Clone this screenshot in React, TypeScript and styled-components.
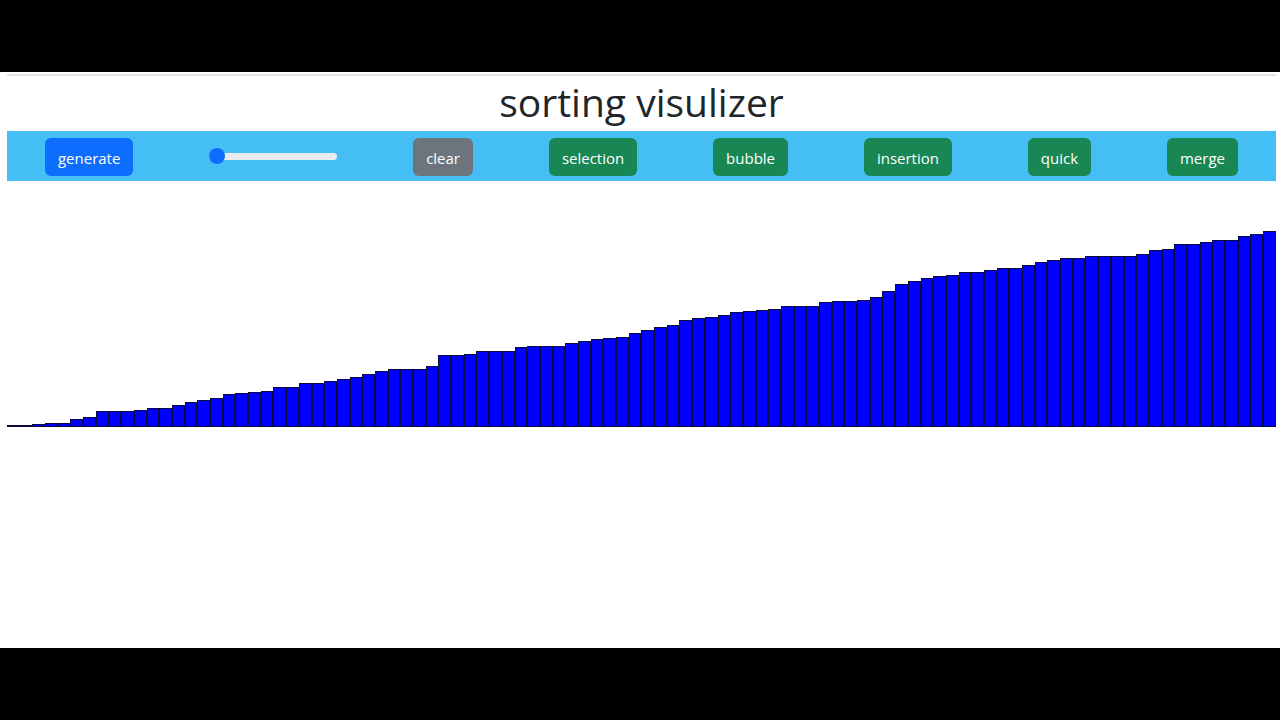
import React from "react";
import styled, { createGlobalStyle } from "styled-components";

const GlobalStyle = createGlobalStyle`
  html, body { margin: 0; padding: 0; background: #000; }
  * { box-sizing: border-box; }
`;

const HEIGHTS = [
  1, 1, 2, 3, 3, 7, 9, 15, 15, 15,
  16, 18, 18, 21, 24, 26, 28, 32, 33, 34,
  35, 39, 39, 43, 43, 45, 47, 49, 52, 55,
  57, 57, 57, 60, 71, 71, 72, 75, 75, 75,
  79, 80, 80, 80, 83, 85, 87, 88, 89, 93,
  96, 99, 101, 106, 108, 109, 111, 114, 115, 116,
  117, 120, 120, 120, 124, 125, 125, 126, 129, 135,
  142, 145, 148, 150, 151, 154, 154, 156, 158, 158,
  161, 164, 166, 168, 168, 170, 170, 170, 170, 172,
  176, 177, 182, 182, 184, 186, 186, 190, 192, 195,
];

const Screen = styled.div`
  width: 1280px;
  height: 720px;
  padding: 72px 0;
  background: #000;
`;

const Page = styled.div`
  height: 576px;
  background: #fff;
  padding: 2px 4px 0 7px;
  font-family: "Open Sans", "Noto Sans", sans-serif;
`;

const Rule = styled.div`
  height: 2px;
  background: #e2e2e2;
`;

const Title = styled.h1`
  margin: 0;
  height: 55px;
  line-height: 52px;
  text-align: center;
  font-size: 39px;
  font-weight: 500;
  color: #212529;
`;

const Toolbar = styled.div`
  height: 50px;
  display: flex;
  align-items: center;
  justify-content: space-around;
  background: #45bdf5;
`;

type Variant = "primary" | "secondary" | "success";
const COLORS: Record<Variant, string> = {
  primary: "#0d6efd",
  secondary: "#6c757d",
  success: "#198754",
};

const Button = styled.button<{ $variant: Variant }>`
  height: 38px;
  margin-top: 1px;
  padding: 2px 13px 0;
  border: none;
  border-radius: 6px;
  background: ${(p) => COLORS[p.$variant]};
  color: #fff;
  font-family: "Open Sans", "Noto Sans", sans-serif;
  font-size: 15px;
  line-height: 36px;
  cursor: pointer;
`;

const Range = styled.input`
  -webkit-appearance: none;
  appearance: none;
  width: 128px;
  height: 16px;
  margin: 0;
  background: transparent;
  &::-webkit-slider-runnable-track {
    height: 7px;
    border-radius: 4px;
    background: #e9ecef;
  }
  &::-webkit-slider-thumb {
    -webkit-appearance: none;
    appearance: none;
    width: 16px;
    height: 16px;
    margin-top: -4.5px;
    border-radius: 50%;
    background: #0d6efd;
    border: none;
  }
`;

const BarArea = styled.div`
  height: 246px;
  width: 1268px;
  display: flex;
  align-items: flex-end;
`;

const Bar = styled.div`
  flex: 1 1 0;
  min-height: 2px;
  background: #0000ff;
  border: 1px solid #0a0a40;
`;

export default function App() {
  return (
    <>
      <GlobalStyle />
      <Screen>
        <Page>
          <Rule />
          <Title>sorting visulizer</Title>
          <Toolbar>
            <Button $variant="primary">generate</Button>
            <Range type="range" min={5} max={100} defaultValue={5} readOnly />
            <Button $variant="secondary">clear</Button>
            <Button $variant="success">selection</Button>
            <Button $variant="success">bubble</Button>
            <Button $variant="success">insertion</Button>
            <Button $variant="success">quick</Button>
            <Button $variant="success">merge</Button>
          </Toolbar>
          <BarArea>
            {HEIGHTS.map((h, i) => (
              <Bar key={i} style={{ height: `${h + 1}px` }} />
            ))}
          </BarArea>
        </Page>
      </Screen>
    </>
  );
}
